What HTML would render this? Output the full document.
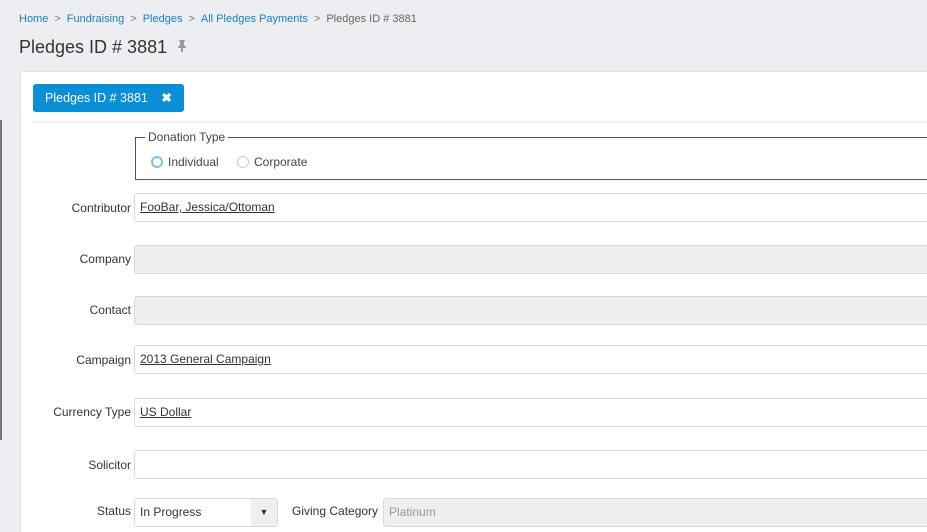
<!DOCTYPE html>
<html style="overflow:hidden;height:532px"><head><style>
body{margin:0;width:927px;height:532px;overflow:hidden;background:#eceef2;font-family:"Liberation Sans",sans-serif;position:relative;font-size:12px;color:#333}
.a{position:absolute}
.bc{left:19px;top:13px;font-size:11px;color:#1a7fc9}
.bc span.s{color:#777;margin:0 6px}
.bc .c{color:#666}
h1{position:absolute;left:19px;top:37px;margin:0;font-weight:normal;font-size:18px;color:#333}
.card{left:20px;top:71px;width:920px;height:470px;background:#fff;border:1px solid #dde0e4;border-radius:3px}
.btn{left:33px;top:84px;width:151px;height:28px;background:#0a8fd6;border-radius:3px;color:#fff;font-size:12.5px;line-height:28px;text-indent:12px}
.lbl{width:131px;left:0;text-align:right;font-size:12px;color:#333}
.in{left:134px;width:800px;height:27px;border:1px solid #d6d8db;border-radius:3px;background:#fff;font-size:12px;line-height:27px;text-indent:5px;color:#333}
.in u{text-decoration:underline}
.dis{background:#efefef}
</style></head><body>
<div class="a" style="left:0;top:120px;width:2px;height:320px;background:#777"></div>
<div class="a bc">Home<span class="s">&gt;</span>Fundraising<span class="s">&gt;</span>Pledges<span class="s">&gt;</span>All Pledges Payments<span class="s">&gt;</span><span class="c">Pledges ID # 3881</span></div>
<h1>Pledges ID # 3881 <svg width="12" height="14" viewBox="0 0 12 14" style="margin-left:4px"><path d="M3 1h6v1H8v4l2 2v1H7v4H5V9H2V8l2-2V2H3z" fill="#999"/></svg></h1>
<div class="a card"></div>
<div class="a btn">Pledges ID # 3881 <span style="margin-left:10px;font-weight:bold">✖</span></div>
<div class="a" style="left:33px;top:121px;width:900px;height:2px;background:#eef0f2"></div>
<div class="a" style="left:135px;top:137px;width:800px;height:41px;border:1px solid #555;border-right:none"></div>
<div class="a" style="left:145px;top:130px;background:#fff;padding:0 3px;font-size:12px;color:#444">Donation Type</div>
<div class="a" style="left:151px;top:156px;width:8px;height:8px;border:2px solid #7fc0e8;border-radius:50%"></div>
<div class="a" style="left:168px;top:155px;color:#444">Individual</div>
<div class="a" style="left:237px;top:156px;width:10px;height:10px;border:1px solid #ccc;border-radius:50%"></div>
<div class="a" style="left:254px;top:155px;color:#444">Corporate</div>

<div class="a lbl" style="top:201px">Contributor</div><div class="a in" style="top:193px"><u>FooBar, Jessica/Ottoman</u></div>
<div class="a lbl" style="top:252px">Company</div><div class="a in dis" style="top:245px"></div>
<div class="a lbl" style="top:303px">Contact</div><div class="a in dis" style="top:296px"></div>
<div class="a lbl" style="top:353px">Campaign</div><div class="a in" style="top:345px"><u>2013 General Campaign</u></div>
<div class="a lbl" style="top:405px">Currency Type</div><div class="a in" style="top:398px"><u>US Dollar</u></div>
<div class="a lbl" style="top:458px">Solicitor</div><div class="a in" style="top:450px"></div>
<div class="a lbl" style="top:504px">Status</div>
<div class="a in" style="top:498px;width:142px">In Progress<div class="a" style="right:0;top:0;width:26px;height:27px;background:#efefef;text-indent:0;text-align:center;font-size:9px">▼</div></div>
<div class="a" style="left:292px;top:504px">Giving Category</div>
<div class="a in dis" style="top:498px;left:383px;width:600px;color:#999">Platinum</div>
</body></html>
